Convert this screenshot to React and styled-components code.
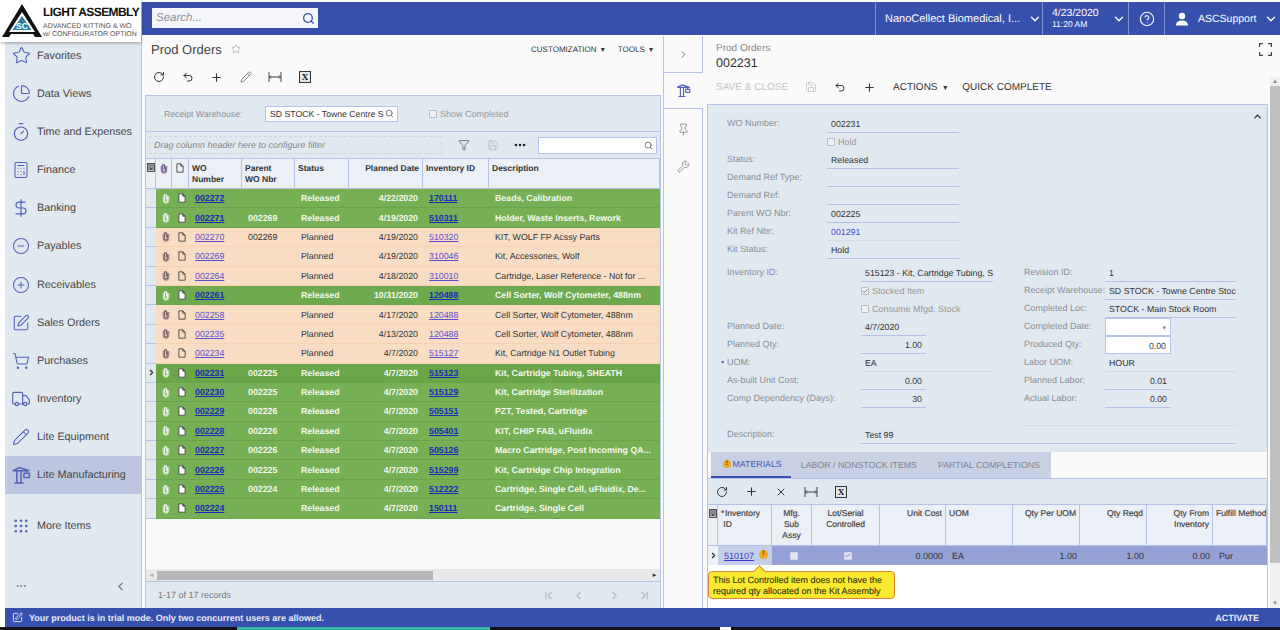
import React from 'react'
import styled, { createGlobalStyle } from 'styled-components'
import {
  Star, PieChart, Timer, Calculator, DollarSign, CircleMinus, CirclePlus, SquarePen, ShoppingCart,
  Truck, Pencil, Grip, ChevronLeft, ChevronRight, ChevronDown, ChevronUp, Search, CircleHelp,
  RotateCw, Undo2, Plus, X, Save, Filter, Ellipsis, ChevronFirst, ChevronLast, Pin, Wrench, Check
} from 'lucide-react'

const BLUE = '#3750ae'
const LINE = '#b6c2ea'
const PANEL = '#e0e8f0'

const GlobalStyle = createGlobalStyle`
  * { box-sizing: border-box; }
  html, body { margin: 0; padding: 0; background: #fff; overflow: hidden; }
  body { font-family: "Liberation Sans", Arial, sans-serif; color: #333; text-rendering: geometricPrecision; }
`

const Crane = ({ size = 20 }) => (
  <svg width={size} height={size} viewBox="0 0 24 24" fill="none" stroke="currentColor" strokeWidth="1.8">
    <path d="M2 7 L10 3 L22 7 M2 7h20 M7 7v14 M12 7v14 M4 21.5h11 M18.5 7v3" />
    <rect x="15.5" y="10" width="6.5" height="5" />
  </svg>
)

const FitCols = () => (
  <svg width="14" height="12" viewBox="0 0 14 12" fill="none" stroke="#444" strokeWidth="1">
    <path d="M1 1v10 M13 1v10 M1 6h12 M3 4.5 1.5 6 3 7.5 M11 4.5 12.5 6 11 7.5" />
  </svg>
)

const ExcelIcon = () => (
  <svg width="12" height="12" viewBox="0 0 12 12">
    <rect x="0.5" y="0.5" width="11" height="11" fill="#e8e8e8" stroke="#333" />
    <text x="6" y="9.4" textAnchor="middle" fontSize="9" fontWeight="700" fontFamily="Liberation Serif, serif" fill="#111">X</text>
  </svg>
)

const Clip = ({ color = '#777' }) => (
  <svg width="8" height="11" viewBox="0 0 8 11" fill="none" stroke={color} strokeWidth="1.5">
    <path d="M5.6 3.2v4.2a1.6 1.6 0 0 1-3.2 0V2.8a1.1 1.1 0 0 1 2.2 0v3.8" />
    <path d="M1.2 3v4.5a2.8 2.8 0 0 0 5.6 0V3" strokeWidth="0.8" />
  </svg>
)

const Doc = ({ fill = 'none', stroke = '#444' }) => (
  <svg width="8" height="10" viewBox="0 0 9 11" fill={fill} stroke={stroke} strokeWidth="1">
    <path d="M1 .8h4.4L8 3.4v6.8H1z M5.4 .8v2.6H8" />
  </svg>
)

const GridCog = () => (
  <svg width="8" height="9" viewBox="0 0 8 9">
    <rect width="8" height="9" fill="#555" />
    <path d="M1 2h6 M1 4h6 M1 6h2 M5 6h2 M1 7.5h6" stroke="#ddd" strokeWidth="0.8" />
  </svg>
)

const UserIcon = () => (
  <svg width="14" height="14" viewBox="0 0 14 14" fill="#fff">
    <circle cx="7" cy="4" r="3.2" />
    <path d="M1 13.5c0-3.4 2.6-5 6-5s6 1.6 6 5z" />
  </svg>
)

const Corners = () => (
  <svg width="13" height="13" viewBox="0 0 13 13" fill="none" stroke="#444" strokeWidth="1.2">
    <path d="M.6 4V.6H4 M9 .6h3.4V4 M.6 9v3.4H4 M9 12.4h3.4V9" />
  </svg>
)

const navItems = [
  { label: 'Favorites', icon: <Star size={19} strokeWidth={1.4} /> },
  { label: 'Data Views', icon: <PieChart size={19} strokeWidth={1.4} /> },
  { label: 'Time and Expenses', icon: <Timer size={20} strokeWidth={1.4} /> },
  { label: 'Finance', icon: <Calculator size={18} strokeWidth={1.4} /> },
  { label: 'Banking', icon: <DollarSign size={20} strokeWidth={1.4} /> },
  { label: 'Payables', icon: <CircleMinus size={18} strokeWidth={1.4} /> },
  { label: 'Receivables', icon: <CirclePlus size={18} strokeWidth={1.4} /> },
  { label: 'Sales Orders', icon: <SquarePen size={18} strokeWidth={1.4} /> },
  { label: 'Purchases', icon: <ShoppingCart size={18} strokeWidth={1.4} /> },
  { label: 'Inventory', icon: <Truck size={20} strokeWidth={1.4} /> },
  { label: 'Lite Equipment', icon: <Pencil size={18} strokeWidth={1.4} /> },
  { label: 'Lite Manufacturing', icon: <Crane />, active: true }
]

const orders = [
  ['002272', '', 'Released', '4/22/2020', '170111', 'Beads, Calibration'],
  ['002271', '002269', 'Released', '4/19/2020', '510311', 'Holder, Waste Inserts, Rework'],
  ['002270', '002269', 'Planned', '4/19/2020', '510320', 'KIT, WOLF FP Acssy Parts'],
  ['002269', '', 'Planned', '4/19/2020', '310046', 'Kit, Accessories, Wolf'],
  ['002264', '', 'Planned', '4/18/2020', '310010', 'Cartridge, Laser Reference - Not for ...'],
  ['002261', '', 'Released', '10/31/2020', '120488', 'Cell Sorter, Wolf Cytometer, 488nm'],
  ['002258', '', 'Planned', '4/17/2020', '120488', 'Cell Sorter, Wolf Cytometer, 488nm'],
  ['002235', '', 'Planned', '4/13/2020', '120488', 'Cell Sorter, Wolf Cytometer, 488nm'],
  ['002234', '', 'Planned', '4/7/2020', '515127', 'Kit, Cartridge N1 Outlet Tubing'],
  ['002231', '002225', 'Released', '4/7/2020', '515123', 'Kit, Cartridge Tubing, SHEATH'],
  ['002230', '002225', 'Released', '4/7/2020', '515129', 'Kit, Cartridge Sterilization'],
  ['002229', '002226', 'Released', '4/7/2020', '505151', 'PZT, Tested, Cartridge'],
  ['002228', '002226', 'Released', '4/7/2020', '505401', 'KIT, CHIP FAB, uFluidix'],
  ['002227', '002226', 'Released', '4/7/2020', '505126', 'Macro Cartridge, Post Incoming QA...'],
  ['002226', '002225', 'Released', '4/7/2020', '515299', 'Kit, Cartridge Chip Integration'],
  ['002225', '002224', 'Released', '4/7/2020', '512222', 'Cartridge, Single Cell, uFluidix, De...'],
  ['002224', '', 'Released', '4/7/2020', '150111', 'Cartridge, Single Cell']
]

const Page = () => (
  <Root>
    <GlobalStyle />
    <Shell>
      <Sidebar>
        {navItems.map((item) => (
          <NavItem key={item.label} $active={item.active}>
            <NavIcon>{item.icon}</NavIcon>
            {item.label}
          </NavItem>
        ))}
        <MoreItem>
          <NavIcon><Grip size={18} strokeWidth={1.6} /></NavIcon>
          More Items
        </MoreItem>
        <SideFooter>
          <Ellipsis size={12} color="#777" />
          <ChevronLeft size={13} color="#777" />
        </SideFooter>
      </Sidebar>
      <Main>
        <TopBar>
          <SearchBox>
            Search...
            <Search size={13} color="#3750ae" strokeWidth={2.4} />
          </SearchBox>
          <TopCell $width={167}>
            <Company>NanoCellect Biomedical, I...</Company>
            <ChevronDown size={14} strokeWidth={2.4} />
          </TopCell>
          <TopCell $width={86}>
            <DateStack>4/23/2020<small>11:20 AM</small></DateStack>
            <ChevronDown size={14} strokeWidth={2.4} />
          </TopCell>
          <TopCell $width={36} $center><CircleHelp size={16} strokeWidth={1.6} /></TopCell>
          <TopCell $width={116} $last>
            <UserIcon />
            <UserName>ASCSupport</UserName>
            <ChevronDown size={14} strokeWidth={2.4} />
          </TopCell>
        </TopBar>
        <Panels>
          <ListPanel />
          <TabRail>
            <RailButton $height={37} $closed><ChevronRight size={11} color="#666" /></RailButton>
            <RailButton $height={36} $open $closed><Crane size={15} /></RailButton>
            <RailButton $height={38} $plain><Pin size={13} color="#777" strokeWidth={1.4} /></RailButton>
            <RailButton $height={37} $plain><Wrench size={13} color="#777" strokeWidth={1.4} /></RailButton>
            <RailFill />
          </TabRail>
          <DetailPanel />
        </Panels>
      </Main>
    </Shell>
    <TrialBar>
      <TrialText>
        <SquarePen size={11} />
        Your product is in trial mode. Only two concurrent users are allowed.
      </TrialText>
      <Activate>ACTIVATE</Activate>
    </TrialBar>
    <Taskbar>
      <TaskApp $width={253} />
      <TaskGap $width={230} />
      <TaskApp $width={11} $white />
    </Taskbar>
    <Logo>
      <svg width="42" height="36" viewBox="0 0 42 36">
        <path d="M21 1 L41 34 H34 L32 31 H10 L8 34 H1 Z" fill="#111" />
        <path d="M21 9 L34 29 H8 Z" fill="#fff" />
        <path d="M21 13 L30.500 27 H11.500 Z" fill="#2f7f9f" />
        <text x="21" y="25.500" textAnchor="middle" fontSize="8.500" fontWeight="700" fill="#eaffff" fontFamily="Liberation Sans, sans-serif">SC</text>
      </svg>
      <LogoText>
        <b>LIGHT ASSEMBLY</b>
        <span>ADVANCED KITTING &amp; WO</span>
        <span>w/ CONFIGURATOR OPTION</span>
      </LogoText>
    </Logo>
  </Root>
)

const ListPanel = () => (
  <List>
    <TitleRow>
      <PageTitle>Prod Orders</PageTitle>
      <Star size={10} color="#8a96a8" strokeWidth={1.4} />
      <TitleLinks>
        <span>CUSTOMIZATION <i>▾</i></span>
        <span>TOOLS <i>▾</i></span>
      </TitleLinks>
    </TitleRow>
    <IconBar>
      <RotateCw size={12} color="#333" />
      <Undo2 size={12} color="#333" />
      <Plus size={13} color="#333" />
      <Pencil size={12} color="#555" strokeWidth={1.4} />
      <FitCols />
      <ExcelIcon />
    </IconBar>
    <GridBox>
      <FilterRow>
        <FilterLabel>Receipt Warehouse:</FilterLabel>
        <FilterInput>
          SD STOCK - Towne Centre S
          <Search size={9} color="#555" />
        </FilterInput>
        <CheckRow>
          <CheckBox />
          Show Completed
        </CheckRow>
      </FilterRow>
      <GridTools>
        <DropZone>Drag column header here to configure filter</DropZone>
        <Filter size={12} color="#444" strokeWidth={1.4} />
        <Save size={12} color="#b4b8c0" strokeWidth={1.4} />
        <MoreDots><Ellipsis size={14} color="#222" strokeWidth={2.6} /></MoreDots>
        <GridSearch><Search size={9} color="#555" /></GridSearch>
      </GridTools>
      <OrderHead>
        <HeadCell $slim><GridCog /></HeadCell>
        <HeadCell $slim><Clip color="#75628c" /></HeadCell>
        <HeadCell $slim><Doc /></HeadCell>
        <HeadCell>WO<br />Number</HeadCell>
        <HeadCell>Parent<br />WO Nbr</HeadCell>
        <HeadCell>Status</HeadCell>
        <HeadCell $right>Planned Date</HeadCell>
        <HeadCell>Inventory ID</HeadCell>
        <HeadCell>Description</HeadCell>
      </OrderHead>
      <OrderBody>
        {orders.map(([wo, parent, status, date, inv, desc]) => {
          const released = status === 'Released'
          return (
            <OrderRow key={wo}>
              <Selector>{wo === '002231' && <ChevronRight size={9} color="#222" strokeWidth={3} />}</Selector>
              <OrderCells $released={released} $current={wo === '002231'} $dark={wo === '002261'}>
                <IconCell><Clip color={released ? '#e8f0e0' : '#7d6a6a'} /></IconCell>
                <IconCell><Doc fill={released ? '#fff' : 'none'} stroke="#444" /></IconCell>
                <OrderCell><OrderLink $released={released}>{wo}</OrderLink></OrderCell>
                <OrderCell>{parent}</OrderCell>
                <OrderCell>{status}</OrderCell>
                <OrderCell $right>{date}</OrderCell>
                <OrderCell><OrderLink $released={released}>{inv}</OrderLink></OrderCell>
                <OrderCell>{desc}</OrderCell>
              </OrderCells>
            </OrderRow>
          )
        })}
      </OrderBody>
      <HScroll>
        <ScrollEnd>◂</ScrollEnd>
        <HThumb />
        <ScrollEnd $dark>▸</ScrollEnd>
      </HScroll>
      <Pager>
        1-17 of 17 records
        <PagerIcons>
          <ChevronFirst size={13} />
          <ChevronLeft size={13} />
          <ChevronRight size={13} />
          <ChevronLast size={13} />
        </PagerIcons>
      </Pager>
    </GridBox>
  </List>
)

const Field = ({ label, value, labelWidth = 100, width = 132, line = 'strong', right, link, boxed, caret, required, check }) => (
  <FieldRow $labelWidth={labelWidth} $width={width}>
    <FieldLabel>{required && <Req>•</Req>}{label}</FieldLabel>
    {check !== undefined ? (
      <CheckRow>
        <CheckBox $checked={check}>{check && <Check size={7} color="#777" strokeWidth={4} />}</CheckBox>
        {value}
      </CheckRow>
    ) : (
      <FieldValue $line={line} $right={right} $link={link} $boxed={boxed}>
        {value}
        {caret && <Caret>▾</Caret>}
      </FieldValue>
    )}
  </FieldRow>
)

const DetailPanel = () => (
  <Detail>
    <DetailHead>
      <div>
        <Crumb>Prod Orders</Crumb>
        <DetailNumber>002231</DetailNumber>
      </div>
      <Corners />
    </DetailHead>
    <DetailScroll>
      <DetailBody>
        <ActionBar>
          <ActionText $off>SAVE &amp; CLOSE</ActionText>
          <Save size={12} color="#b4b8c0" strokeWidth={1.3} />
          <Undo2 size={12} color="#333" />
          <Plus size={13} color="#333" />
          <ActionText>ACTIONS <i>▾</i></ActionText>
          <QuickComplete>QUICK COMPLETE</QuickComplete>
        </ActionBar>
        <FormBox>
          <Form>
            <CollapseMark><ChevronUp size={11} color="#333" strokeWidth={3} /></CollapseMark>
            <Field label="WO Number:" value="002231" />
            <Field label="" value="Hold" check={false} />
            <Field label="Status:" value="Released" />
            <Field label="Demand Ref Type:" value="" />
            <Field label="Demand Ref:" value="" />
            <Field label="Parent WO Nbr:" value="002225" />
            <Field label="Kit Ref Nbr:" value="001291" link line="light" />
            <Field label="Kit Status:" value="Hold" />
            <TwoCols>
              <Field labelWidth={134} label="Inventory ID:" value="515123 - Kit, Cartridge Tubing, S" />
              <Field labelWidth={81} width={131} label="Revision ID:" value="1" />
              <Field labelWidth={134} label="" value="Stocked Item" check />
              <Field labelWidth={81} width={131} label="Receipt Warehouse:" value="SD STOCK - Towne Centre Stoc" />
              <Field labelWidth={134} label="" value="Consume Mfgd. Stock" check={false} />
              <Field labelWidth={81} width={131} label="Completed Loc:" value="STOCK - Main Stock Room" />
              <Field labelWidth={134} width={65} label="Planned Date:" value="4/7/2020" />
              <Field labelWidth={81} width={66} label="Completed Date:" value="" boxed caret />
              <Field labelWidth={134} width={65} label="Planned Qty:" value="1.00" right />
              <Field labelWidth={81} width={66} label="Produced Qty:" value="0.00" right boxed />
              <Field labelWidth={134} label="UOM:" value="EA" line="light" required />
              <Field labelWidth={81} width={131} label="Labor UOM:" value="HOUR" line="light" />
              <Field labelWidth={134} width={65} label="As-built Unit Cost:" value="0.00" right />
              <Field labelWidth={81} width={66} label="Planned Labor:" value="0.01" right />
              <Field labelWidth={134} width={65} label="Comp Dependency (Days):" value="30" right />
              <Field labelWidth={81} width={66} label="Actual Labor:" value="0.00" right />
              <span />
              <Field labelWidth={0} width={212} label="" value="" line="light" />
            </TwoCols>
            <Field labelWidth={134} width={375} label="Description:" value="Test 99" />
          </Form>
          <Tabs>
            <Tab $active><Badge>!</Badge>MATERIALS</Tab>
            <Tab>LABOR / NONSTOCK ITEMS</Tab>
            <Tab>PARTIAL COMPLETIONS</Tab>
          </Tabs>
          <IconBar $boxed>
            <RotateCw size={12} color="#333" />
            <Plus size={13} color="#333" />
            <X size={12} color="#333" />
            <FitCols />
            <ExcelIcon />
          </IconBar>
          <Materials>
            <MatHead>
              <MatHeadCell $slim><GridCog /></MatHeadCell>
              <MatHeadCell><Req $red>*</Req>Inventory<br />&nbsp;ID</MatHeadCell>
              <MatHeadCell $center>Mfg.<br />Sub<br />Assy</MatHeadCell>
              <MatHeadCell $center>Lot/Serial<br />Controlled</MatHeadCell>
              <MatHeadCell $right>Unit Cost</MatHeadCell>
              <MatHeadCell>UOM</MatHeadCell>
              <MatHeadCell $right>Qty Per UOM</MatHeadCell>
              <MatHeadCell $right>Qty Reqd</MatHeadCell>
              <MatHeadCell $right>Qty From<br />Inventory</MatHeadCell>
              <MatHeadCell>Fulfill Method</MatHeadCell>
            </MatHead>
            <MatRow>
              <MatSelector><ChevronRight size={9} color="#222" strokeWidth={3} /></MatSelector>
              <MatKey>
                <MatLink>510107</MatLink>
                <Badge $small>!</Badge>
              </MatKey>
              <MatCell $center><CheckBox $flat /></MatCell>
              <MatCell $center><CheckBox $flat $checked><Check size={7} color="#667" strokeWidth={3} /></CheckBox></MatCell>
              <MatCell $right>0.0000</MatCell>
              <MatCell>EA</MatCell>
              <MatCell $right>1.00</MatCell>
              <MatCell $right>1.00</MatCell>
              <MatCell $right>0.00</MatCell>
              <MatCell>Pur</MatCell>
            </MatRow>
            <Tooltip>
              This Lot Controlled item does not have the<br />
              required qty allocated on the Kit Assembly
            </Tooltip>
          </Materials>
        </FormBox>
      </DetailBody>
      <VScroll>
        <VArrow>▴</VArrow>
        <VThumb />
        <VArrow>▾</VArrow>
      </VScroll>
    </DetailScroll>
  </Detail>
)

const Root = styled.div`
  width: 1280px;
  height: 630px;
  overflow: hidden;
  position: relative;
  display: flex;
  flex-direction: column;
  padding-top: 2px;
`

const Shell = styled.div`
  flex: 1;
  min-height: 0;
  display: flex;
  padding-left: 5px;
`

const Sidebar = styled.nav`
  width: 137px;
  flex: none;
  background: ${PANEL};
  border-right: 1px solid ${LINE};
  padding-top: 34.6px;
  display: flex;
  flex-direction: column;
`

const NavItem = styled.div`
  height: 38.15px;
  flex: none;
  display: flex;
  align-items: center;
  font-size: 10.8px;
  white-space: nowrap;
  color: #444;
  background: ${(p) => (p.$active ? '#bdc7e0' : 'transparent')};
`

const MoreItem = styled(NavItem)`
  margin-top: 12.5px;
`

const NavIcon = styled.span`
  width: 32px;
  flex: none;
  display: flex;
  justify-content: center;
  color: #5560b8;
`

const SideFooter = styled.div`
  margin-top: auto;
  height: 34px;
  padding: 0 14px 10px 10px;
  display: flex;
  justify-content: space-between;
  align-items: center;
`

const Main = styled.div`
  flex: 1;
  min-width: 0;
  display: flex;
  flex-direction: column;
`

const TopBar = styled.header`
  height: 33px;
  flex: none;
  background: ${BLUE};
  display: flex;
  align-items: stretch;
  color: #fff;
  padding-left: 10px;
  margin-bottom: 1px;
`

const SearchBox = styled.div`
  width: 166px;
  height: 20px;
  margin: 6px auto 0 0;
  background: #f5f6fa;
  color: #8a8f98;
  font-size: 11.5px;
  font-style: italic;
  padding: 0 3px 0 4px;
  display: flex;
  align-items: center;
  justify-content: space-between;
`

const TopCell = styled.div`
  width: ${(p) => p.$width}px;
  flex: none;
  border-left: 1px solid #7f8fcc;
  display: flex;
  align-items: center;
  justify-content: ${(p) => (p.$center ? 'center' : 'flex-start')};
  padding-left: ${(p) => (p.$center ? 0 : p.$last ? '10px' : '9px')};
  gap: 8px;
`

const Company = styled.span`
  font-size: 11px;
  white-space: nowrap;
`

const DateStack = styled.div`
  font-size: 10.5px;
  line-height: 12px;
  width: 52px;
  small {
    display: block;
    font-size: 8.5px;
    line-height: 11px;
  }
`

const UserName = styled.span`
  font-size: 10.5px;
  margin-left: 1px;
`

const Panels = styled.div`
  flex: 1;
  min-height: 0;
  display: flex;
`

const List = styled.section`
  width: 521px;
  flex: none;
  background: #fafafa;
  display: flex;
  flex-direction: column;
  padding: 0 2px 0 3px;
`

const TitleRow = styled.div`
  height: 29px;
  flex: none;
  display: flex;
  align-items: center;
  padding: 0 8px 3px 6px;
  gap: 9px;
`

const PageTitle = styled.h1`
  margin: 0;
  font-size: 13px;
  font-weight: 400;
  color: #444;
`

const TitleLinks = styled.div`
  margin-left: auto;
  display: flex;
  gap: 13px;
  font-size: 8px;
  color: #333;
  i {
    font-style: normal;
    margin-left: 2px;
  }
`

const IconBar = styled.div`
  height: ${(p) => (p.$boxed ? '27px' : '30px')};
  flex: none;
  display: flex;
  align-items: center;
  gap: ${(p) => (p.$boxed ? '17px' : '16.5px')};
  padding: ${(p) => (p.$boxed ? '0 0 0 8px' : '0 0 6px 8px')};
  background: ${(p) => (p.$boxed ? PANEL : 'transparent')};
  ${(p) => p.$boxed && `border-top: 1px solid ${LINE};`}
  ${(p) => p.$boxed && `border-bottom: 1px solid ${LINE};`}
`

const GridBox = styled.div`
  flex: 1;
  min-height: 0;
  border: 1px solid ${LINE};
  border-bottom: 0;
  display: flex;
  flex-direction: column;
  background: #fafafa;
`

const FilterRow = styled.div`
  height: 36px;
  flex: none;
  background: ${PANEL};
  border-bottom: 1px solid ${LINE};
  display: flex;
  align-items: center;
  font-size: 8.7px;
  color: #8a8f98;
  padding-left: 18px;
`

const FilterLabel = styled.span`
  width: 101px;
`

const FilterInput = styled.div`
  width: 133px;
  height: 16px;
  background: #fff;
  border: 1px solid ${LINE};
  color: #333;
  display: flex;
  align-items: center;
  justify-content: space-between;
  padding: 0 3px 0 4px;
  white-space: nowrap;
  margin-right: 31px;
  svg {
    flex: none;
  }
`

const CheckRow = styled.div`
  display: flex;
  align-items: center;
  gap: 3px;
  color: #999;
  font-size: 9px;
  height: 100%;
`

const CheckBox = styled.span`
  width: 8px;
  height: 8px;
  flex: none;
  display: inline-flex;
  align-items: center;
  justify-content: center;
  background: ${(p) => (p.$flat ? '#dfe3f2' : '#eef1f5')};
  border: 1px solid ${(p) => (p.$flat ? '#cfd5ea' : '#bbb')};
  border-radius: 1px;
`

const GridTools = styled.div`
  height: 27px;
  flex: none;
  display: flex;
  align-items: center;
  background: ${PANEL};
  border-bottom: 1px solid ${LINE};
  padding: 0 3px;
  gap: 17px;
`

const DropZone = styled.div`
  width: 298px;
  height: 18px;
  margin-right: -1px;
  border: 1px dashed #cfd6e2;
  font-size: 9px;
  font-style: italic;
  color: #888;
  display: flex;
  align-items: center;
  padding-left: 4px;
`

const MoreDots = styled.span`
  display: flex;
  margin-left: -3px;
`

const GridSearch = styled.div`
  width: 121px;
  height: 17px;
  margin-left: -6px;
  background: #fff;
  border: 1px solid ${LINE};
  display: flex;
  align-items: center;
  justify-content: flex-end;
  padding-right: 3px;
`

const ORDER_COLS = '16px 17px 53px 53px 54px 74px 66px 1fr'

const OrderHead = styled.div`
  height: 30px;
  flex: none;
  display: grid;
  grid-template-columns: 10px ${ORDER_COLS};
  background: #ebf0f6;
  border-bottom: 1px solid ${LINE};
`

const HeadCell = styled.div`
  font-size: 8.5px;
  font-weight: 700;
  line-height: 11px;
  color: #333;
  padding: ${(p) => (p.$slim ? '4px 0 0 0' : '4px 3px 0 3px')};
  display: ${(p) => (p.$slim ? 'flex' : 'block')};
  justify-content: center;
  align-items: flex-start;
  text-align: ${(p) => (p.$right ? 'right' : 'left')};
  border-right: 1px solid ${LINE};
  white-space: nowrap;
`

const OrderBody = styled.div`
  flex: 1;
  min-height: 0;
`

const OrderRow = styled.div`
  height: 19.4px;
  display: flex;
`

const Selector = styled.div`
  width: 10px;
  flex: none;
  background: ${PANEL};
  border-bottom: 1px solid ${LINE};
  display: flex;
  align-items: center;
  justify-content: center;
`

const rowColor = (p) => {
  if (p.$current) return '#6aa548'
  if (p.$dark) return '#6fa94e'
  return p.$released ? '#76af54' : '#f9dcc4'
}

const OrderCells = styled.div`
  flex: 1;
  display: grid;
  grid-template-columns: ${ORDER_COLS};
  align-items: center;
  font-size: 8.8px;
  background: ${rowColor};
  color: ${(p) => (p.$released ? '#f4f8ee' : '#333')};
  font-weight: ${(p) => (p.$released ? 700 : 400)};
  border-bottom: 1px solid ${(p) => (p.$released ? '#6ba34b' : '#f5d2b4')};
`

const IconCell = styled.div`
  display: flex;
  justify-content: center;
  padding-left: 3px;
`

const OrderCell = styled.div`
  padding: 0 5px 0 6px;
  white-space: nowrap;
  overflow: hidden;
  text-align: ${(p) => (p.$right ? 'right' : 'left')};
`

const OrderLink = styled.span`
  color: ${(p) => (p.$released ? '#1a2bb8' : '#5a50d0')};
  text-decoration: underline;
`

const HScroll = styled.div`
  height: 12px;
  flex: none;
  background: #e8e8e8;
  display: flex;
  align-items: center;
`

const ScrollEnd = styled.span`
  width: 11px;
  font-size: 7px;
  text-align: center;
  color: ${(p) => (p.$dark ? '#333' : '#aaa')};
`

const HThumb = styled.div`
  width: 276px;
  height: 9px;
  margin-right: auto;
  background: #b6b6b6;
`

const Pager = styled.div`
  height: 27px;
  flex: none;
  background: ${PANEL};
  border-top: 1px solid ${LINE};
  display: flex;
  align-items: center;
  justify-content: space-between;
  font-size: 9px;
  color: #777;
  padding: 0 9px 0 12px;
`

const PagerIcons = styled.div`
  display: flex;
  gap: 17px;
  color: #b0b8c6;
  svg:nth-child(2) {
    margin-right: 6px;
  }
`

const TabRail = styled.aside`
  width: 40px;
  flex: none;
  background: #fafafa;
  border-left: 1px solid ${LINE};
  display: flex;
  flex-direction: column;
`

const RailButton = styled.div`
  height: ${(p) => p.$height}px;
  flex: none;
  display: flex;
  align-items: center;
  justify-content: center;
  color: #5560b8;
  border-right: ${(p) => (p.$open ? '0' : `1px solid ${LINE}`)};
  border-bottom: ${(p) => (p.$closed ? `1px solid ${LINE}` : '0')};
  padding-top: ${(p) => (p.$plain ? '2px' : '0')};
`

const RailFill = styled.div`
  flex: 1;
  border-right: 1px solid ${LINE};
`

const Detail = styled.section`
  flex: 1;
  min-width: 0;
  background: #fafafa;
  display: flex;
  flex-direction: column;
`

const DetailHead = styled.div`
  height: 41px;
  flex: none;
  display: flex;
  justify-content: space-between;
  padding: 7px 8px 0 13px;
`

const Crumb = styled.div`
  font-size: 10px;
  line-height: 12px;
  color: #888;
`

const DetailNumber = styled.div`
  font-size: 12.5px;
  line-height: 16px;
  color: #333;
`

const DetailScroll = styled.div`
  flex: 1;
  min-height: 0;
  display: flex;
`

const DetailBody = styled.div`
  flex: 1;
  min-width: 0;
  display: flex;
  flex-direction: column;
  padding: 0 2px 0 4px;
`

const ActionBar = styled.div`
  height: 27px;
  flex: none;
  display: flex;
  align-items: center;
  gap: 17px;
  padding: 0 0 7px 9px;
`

const ActionText = styled.span`
  font-size: 10px;
  color: ${(p) => (p.$off ? '#c2c6cc' : '#333')};
  i {
    font-style: normal;
    font-size: 8px;
    margin-left: 3px;
  }
`

const QuickComplete = styled(ActionText)`
  margin-left: -2px;
`

const FormBox = styled.div`
  flex: 1;
  min-height: 0;
  border: 1px solid ${LINE};
  border-bottom: 0;
  display: flex;
  flex-direction: column;
  background: #fafafa;
`

const Form = styled.div`
  position: relative;
  flex: none;
  background: ${PANEL};
  padding: 10px 0 8px 19px;
`

const CollapseMark = styled.span`
  position: absolute;
  top: 4px;
  right: 4px;
`

const TwoCols = styled.div`
  display: grid;
  grid-template-columns: 266px 212px;
  column-gap: 31px;
  margin-top: 5px;
`

const FieldRow = styled.div`
  height: 18px;
  display: grid;
  grid-template-columns: ${(p) => p.$labelWidth}px ${(p) => p.$width}px;
  align-items: stretch;
`

const FieldLabel = styled.div`
  font-size: 9px;
  line-height: 17px;
  color: #8a8f98;
  white-space: nowrap;
`

const Req = styled.span`
  display: inline-block;
  width: ${(p) => (p.$red ? '4px' : '6px')};
  margin-left: ${(p) => (p.$red ? '0' : '-6px')};
  color: ${(p) => (p.$red ? '#d04040' : '#666')};
`

const FieldValue = styled.div`
  font-size: 8.8px;
  line-height: 19px;
  color: ${(p) => (p.$link ? '#4a4ad0' : '#333')};
  padding: 0 ${(p) => (p.$right ? '4px' : '3px')} 0 4px;
  text-align: ${(p) => (p.$right ? 'right' : 'left')};
  white-space: nowrap;
  overflow: hidden;
  position: relative;
  background: ${(p) => (p.$boxed ? '#fff' : 'transparent')};
  border: ${(p) => (p.$boxed ? `1px solid ${LINE}` : '0')};
  border-bottom: 1px solid ${(p) => (p.$line === 'light' && !p.$boxed ? '#d4dbe8' : LINE)};
`

const Caret = styled.span`
  position: absolute;
  right: 4px;
  top: 0;
  font-size: 7px;
  color: #888;
`

const Tabs = styled.div`
  height: 26px;
  width: 340px;
  margin-left: 3px;
  flex: none;
  display: flex;
  background: #c8d1e3;
  font-size: 8.8px;
  color: #7d8492;
`

const Tab = styled.div`
  display: flex;
  align-items: center;
  gap: 1.5px;
  padding: 0 11px 0 10px;
  white-space: nowrap;
  ${(p) =>
    p.$active &&
    `
    color: #4458c0;
    width: 81px;
    padding: 0 0 0 12px;
    border-bottom: 2px solid #3750ae;
  `}
`

const Badge = styled.span`
  width: ${(p) => (p.$small ? '9px' : '8px')};
  height: ${(p) => (p.$small ? '9px' : '8px')};
  border-radius: 50%;
  background: #f0a820;
  color: #6a4400;
  font-size: 7px;
  font-weight: 700;
  line-height: 8px;
  text-align: center;
  display: inline-block;
  flex: none;
`

const MAT_COLS = '10px 54px 40px 68px 66px 67px 67px 67px 66px 1fr'

const Materials = styled.div`
  position: relative;
  flex: 1;
  min-height: 0;
  background: #fff;
`

const MatHead = styled.div`
  height: 41px;
  display: grid;
  grid-template-columns: ${MAT_COLS};
  background: #ebf0f6;
  border-bottom: 1px solid ${LINE};
`

const MatHeadCell = styled.div`
  font-size: 8.5px;
  line-height: 11px;
  font-weight: 400;
  color: #444;
  -webkit-text-stroke: 0.2px #444;
  padding: ${(p) => (p.$slim ? '4px 0 0 1px' : '3px 3px 0 3px')};
  border-right: 1px solid ${LINE};
  text-align: ${(p) => (p.$right ? 'right' : p.$center ? 'center' : 'left')};
  white-space: nowrap;
  overflow: hidden;
`

const MatRow = styled.div`
  height: 19px;
  display: grid;
  grid-template-columns: ${MAT_COLS};
  align-items: center;
  background: #96a2d6;
  font-size: 9px;
  color: #333;
`

const MatSelector = styled.div`
  height: 100%;
  background: #eef2f7;
  display: flex;
  align-items: center;
  justify-content: center;
`

const MatKey = styled.div`
  height: 100%;
  background: #c6cfea;
  display: flex;
  align-items: center;
  justify-content: space-between;
  padding: 0 4px 3px 6px;
`

const MatLink = styled.span`
  color: #3a3ac8;
  text-decoration: underline;
  margin-top: 3px;
`

const MatCell = styled.div`
  padding: 0 3px 0 6px;
  display: ${(p) => (p.$center ? 'flex' : 'block')};
  justify-content: center;
  text-align: ${(p) => (p.$right ? 'right' : 'left')};
`

const Tooltip = styled.div`
  position: absolute;
  left: 0;
  top: 66px;
  width: 187px;
  height: 28px;
  background: #fbe92f;
  border: 1px solid #d8843a;
  border-radius: 4px;
  font-size: 9px;
  line-height: 11px;
  color: #3a3a10;
  -webkit-text-stroke: 0.15px #3a3a10;
  padding: 3px 4px;
  white-space: nowrap;
  &::before {
    content: '';
    position: absolute;
    left: 46px;
    top: -5px;
    width: 8px;
    height: 8px;
    background: #fbe92f;
    border-left: 1px solid #d8843a;
    border-top: 1px solid #d8843a;
    transform: rotate(45deg);
  }
`

const VScroll = styled.div`
  width: 10px;
  flex: none;
  background: #f0f0f0;
  display: flex;
  flex-direction: column;
  align-items: center;
`

const VArrow = styled.span`
  height: 9px;
  font-size: 7px;
  line-height: 9px;
  color: #888;
`

const VThumb = styled.div`
  flex: 1;
  align-self: stretch;
  background: #c0c0c0;
  margin: 0 0 36px;
`

const TrialBar = styled.div`
  height: 19px;
  flex: none;
  margin-left: 5px;
  background: ${BLUE};
  color: #e8ecf8;
  display: flex;
  align-items: center;
  justify-content: space-between;
  padding: 0 21px 0 7px;
  font-size: 9px;
`

const TrialText = styled.span`
  display: flex;
  align-items: center;
  gap: 6px;
  font-weight: 700;
`

const Activate = styled.span`
  font-weight: 700;
`

const Taskbar = styled.div`
  height: 3px;
  flex: none;
  background: #111;
  display: flex;
  padding-left: 237px;
`

const TaskApp = styled.span`
  width: ${(p) => p.$width}px;
  background: ${(p) => (p.$white ? '#fff' : '#36b8a8')};
`

const TaskGap = styled.span`
  width: ${(p) => p.$width}px;
`

const Logo = styled.div`
  position: absolute;
  left: 0;
  top: 0;
  width: 141px;
  height: 42px;
  background: #fff;
  box-shadow: 0 1px 3px rgba(0, 0, 0, 0.35);
  display: flex;
  align-items: flex-start;
  padding: 3px 0 0 1px;
  gap: 0;
`

const LogoText = styled.div`
  display: flex;
  flex-direction: column;
  color: #555;
  font-size: 7px;
  line-height: 7.5px;
  padding-top: 3px;
  b {
    font-size: 12px;
    line-height: 13px;
    letter-spacing: -0.6px;
    color: #111;
    margin-bottom: 4px;
  }
  span {
    white-space: nowrap;
  }
`

export default function App() {
  return <Page />
}
